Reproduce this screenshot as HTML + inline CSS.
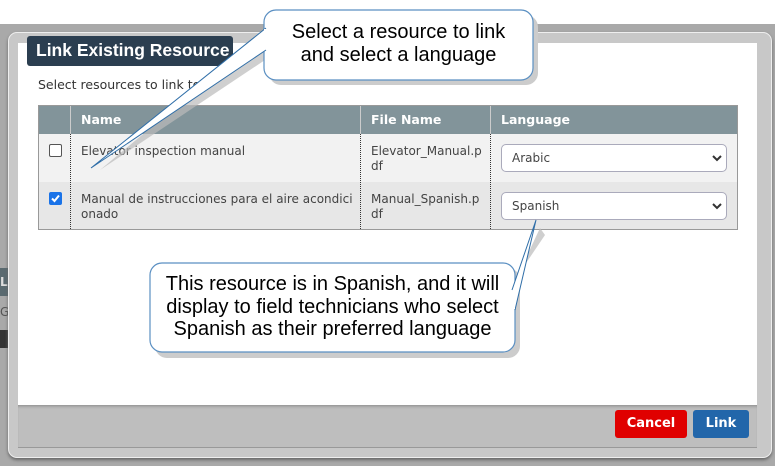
<!DOCTYPE html><html><head><style>
body{margin:0;width:775px;height:466px;position:relative;overflow:hidden;background:#fff;font-family:"DejaVu Sans","Liberation Sans",sans-serif}
.abs{position:absolute}
</style></head><body>
<div class="abs" style="left:0;top:24px;width:775px;height:442px;background:#a9a9a9"></div>
<div class="abs" style="left:0;top:268px;width:18px;height:28px;background:#5a6a70;color:#ddd;font-size:12px;font-weight:bold;line-height:28px">La</div>
<div class="abs" style="left:0;top:305px;font-size:12px;color:#555">Ge</div>
<div class="abs" style="left:0;top:330px;width:18px;height:18px;background:#333"></div>
<div class="abs" style="left:8px;top:32px;width:762px;height:424px;background:#c8c8c8;border:1px solid #eee;border-radius:9px;box-shadow:0 2px 3px #666"></div>
<div class="abs" style="left:18px;top:43px;width:739px;height:362px;background:#fff"></div>
<div class="abs" style="left:18px;top:405px;width:739px;height:42px;background:#bebebe;border-bottom:1px solid #999;box-shadow:inset 0 3px 3px -2px #888"></div>
<div class="abs" style="left:27px;top:36px;width:206px;height:30px;background:#2b3e50;border-radius:3px;color:#fff;font-weight:bold;font-family:'Liberation Sans',sans-serif;font-size:17.5px;line-height:28px;padding-left:9px;box-sizing:border-box;white-space:nowrap">Link Existing Resource</div>
<div class="abs" style="left:38px;top:77px;font-size:12.5px;color:#333">Select resources to link to</div>
<div class="abs" style="left:38px;top:105px;width:700px;height:125px;border:1px solid #999;box-sizing:border-box;font-size:12px;color:#444">
 <div class="abs" style="left:0;top:0;width:698px;height:28px;background:#82949a;color:#fff;font-weight:bold;font-size:12.5px;line-height:28px">
  <span class="abs" style="left:42px">Name</span><span class="abs" style="left:332px">File Name</span><span class="abs" style="left:462px">Language</span>
 </div>
 <div class="abs" style="left:31px;top:0;width:1px;height:28px;background:#ccc"></div>
 <div class="abs" style="left:321px;top:0;width:1px;height:28px;background:#ccc"></div>
 <div class="abs" style="left:451px;top:0;width:1px;height:28px;background:#ccc"></div>
 <div class="abs" style="left:0;top:28px;width:698px;height:48px;background:#f2f2f2"></div>
 <div class="abs" style="left:0;top:76px;width:698px;height:47px;background:#e7e7e7"></div>
 <div class="abs" style="left:31px;top:28px;height:95px;border-left:1px dotted #333"></div>
 <div class="abs" style="left:321px;top:28px;height:95px;border-left:1px dotted #333"></div>
 <div class="abs" style="left:451px;top:28px;height:95px;border-left:1px dotted #333"></div>
 <div class="abs" style="left:10px;top:38px;width:11px;height:11px;border:1px solid #555;border-radius:2px;background:#fff"></div>
 <div class="abs" style="left:10px;top:86px;width:13px;height:13px;border-radius:2px;background:#1a73e8"><svg width="13" height="13"><path d="M3 6.5 L5.5 9 L10 3.5" stroke="#fff" stroke-width="2" fill="none"/></svg></div>
 <div class="abs" style="left:42px;top:38px;line-height:15px">Elevator inspection manual</div>
 <div class="abs" style="left:42px;top:86px;line-height:15px">Manual de instrucciones para el aire acondici<br>onado</div>
 <div class="abs" style="left:332px;top:38px;line-height:15px">Elevator_Manual.p<br>df</div>
 <div class="abs" style="left:332px;top:86px;line-height:15px">Manual_Spanish.p<br>df</div>
 <div class="abs" style="left:462px;top:38px;width:226px;height:28px;background:#fff;border:1px solid #aab;border-radius:5px;box-sizing:border-box;line-height:26px;padding-left:10px">Arabic<svg class="abs" style="right:4px;top:9px" width="10" height="8"><path d="M1 2 L5 6 L9 2" stroke="#333" stroke-width="2" fill="none"/></svg></div>
 <div class="abs" style="left:462px;top:86px;width:226px;height:28px;background:#fff;border:1px solid #aab;border-radius:5px;box-sizing:border-box;line-height:26px;padding-left:10px">Spanish<svg class="abs" style="right:4px;top:9px" width="10" height="8"><path d="M1 2 L5 6 L9 2" stroke="#333" stroke-width="2" fill="none"/></svg></div>
</div>
<div class="abs" style="left:615px;top:410px;width:72px;height:28px;background:#e00000;border-radius:3px;color:#fff;font-weight:bold;font-size:13px;text-align:center;line-height:28px">Cancel</div>
<div class="abs" style="left:693px;top:410px;width:56px;height:28px;background:#2266aa;border-radius:3px;color:#fff;font-weight:bold;font-size:13px;text-align:center;line-height:28px">Link</div>
<svg class="abs" style="left:0;top:0" width="775" height="466">
 <path d="M268 30 L100 170 L268 58Z" fill="#bbb" opacity=".7"/>
 <path d="M540 228 L518 275 L545 235Z" fill="#bbb" opacity=".7"/>
 <rect x="269" y="15" width="269" height="70" rx="12" fill="#ccc"/>
 <rect x="155" y="268" width="365" height="90" rx="12" fill="#ccc"/>
 <rect x="264" y="10" width="269" height="70" rx="12" fill="#fff" stroke="#5a8fc2" stroke-width="1.2"/>
 <rect x="150" y="263" width="365" height="89" rx="12" fill="#fff" stroke="#5a8fc2" stroke-width="1.2"/>
 <path d="M266 28 L91 168 L266 50" fill="#fff" stroke="#2f6ea8" stroke-width="1"/>
 <path d="M512 290 L536 220 L515 310" fill="#fff" stroke="#2f6ea8" stroke-width="1"/>
 <path d="M265 29 L265 49 M514 291 L514 309" stroke="#fff" stroke-width="2"/>
</svg>
<div class="abs" style="left:264px;top:21px;width:269px;text-align:center;font-family:'Liberation Sans',sans-serif;font-size:20px;line-height:23px;color:#000;white-space:nowrap">Select a resource to link<br>and select a language</div>
<div class="abs" style="left:150px;top:273px;width:365px;text-align:center;font-family:'Liberation Sans',sans-serif;font-size:20px;line-height:22.5px;color:#000;white-space:nowrap">This resource is in Spanish, and it will<br>display to field technicians who select<br>Spanish as their preferred language</div>
</body></html>
